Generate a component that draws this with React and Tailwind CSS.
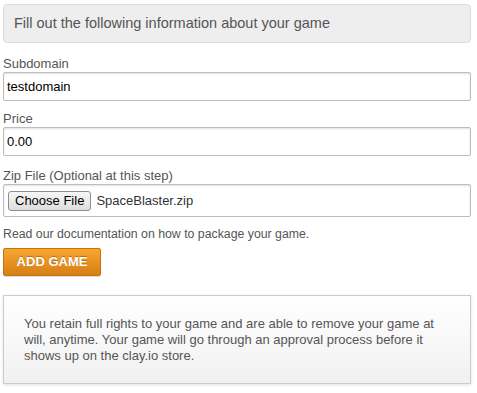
import React from 'react'

const inputCls =
  'border border-[#bdbdbd] rounded-[2px] shadow-[inset_0_1px_2px_rgba(0,0,0,0.12)] flex items-center text-[13px]'

function Label({ children }) {
  return <div className="text-[13px] leading-[16px] text-[#555]">{children}</div>
}

function App() {
  return (
    <div className="w-[477px] h-[393px] bg-white pt-[4px] pl-[3px] font-['Liberation_Sans',Arial,sans-serif]">
      <div className="w-[468px]">
        <div className="h-[39px] rounded-[4px] border border-[#dcdcdc] bg-[#eeeeee] pl-[10px] flex items-center text-[14.5px] text-[#555]">
          Fill out the following information about your game
        </div>

        <div className="mt-[13px]">
          <Label>Subdomain</Label>
          <div className={`${inputCls} h-[29px] pl-[3px] text-black`}>testdomain</div>
        </div>

        <div className="mt-[10px]">
          <Label>Price</Label>
          <div className={`${inputCls} h-[29px] pl-[3px] text-black`}>0.00</div>
        </div>

        <div className="mt-[12px]">
          <Label>Zip File (Optional at this step)</Label>
          <div className={`${inputCls} h-[33px] pl-[4px] gap-[5px]`}>
            <button className="h-[20px] px-[6px] border border-[#8e8e8e] rounded-[3px] bg-gradient-to-b from-[#f6f6f6] to-[#dedede] text-[13px] text-black leading-none">
              Choose File
            </button>
            <span className="text-[#333]">SpaceBlaster.zip</span>
          </div>
        </div>

        <p className="mt-[9px] text-[12.3px] leading-[16px] text-[#555]">
          Read our documentation on how to package your game.
        </p>

        <button className="mt-[6px] w-[98px] h-[28px] rounded-[2px] border border-[#c4740f] bg-gradient-to-b from-[#f8a630] to-[#d87d14] text-white font-bold text-[13px] [text-shadow:0_-1px_0_rgba(0,0,0,0.25)] shadow-[0_1px_1px_rgba(0,0,0,0.15)]">
          ADD GAME
        </button>

        <div className="mt-[19px] h-[89px] border border-[#cccccc] bg-gradient-to-b from-white to-[#f1f1f1] shadow-[0_1px_3px_rgba(0,0,0,0.12)] pl-[20px] pr-[30px] pt-[20px] text-[13px] leading-[16px] text-[#555]">
          You retain full rights to your game and are able to remove your game at will, anytime. Your game will go through an approval process before it shows up on the clay.io store.
        </div>
      </div>
    </div>
  )
}

export default App
